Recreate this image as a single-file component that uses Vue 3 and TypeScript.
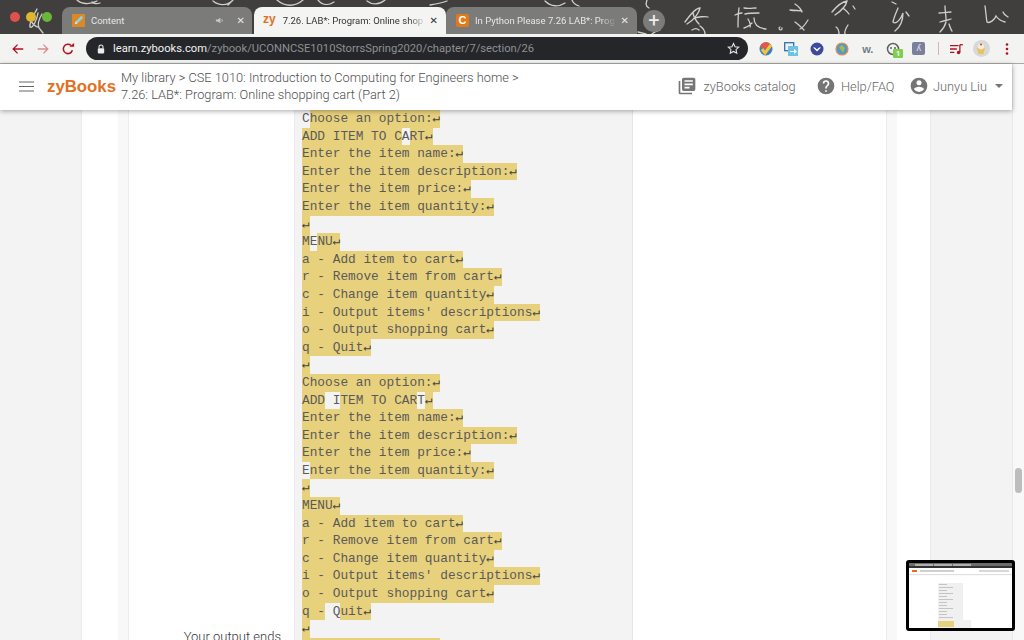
<script setup lang="ts">
type Seg = { t: string; h: boolean };
const H = (t: string): Seg => ({ t, h: true });
const P = (t: string): Seg => ({ t, h: false });
const menu: Seg[][] = [
  [H('a - Add item to cart↵')],
  [H('r - Remove item from cart↵')],
  [H('c - Change item quantity↵')],
  [H("i - Output items' descriptions↵")],
  [H('o - Output shopping cart↵')],
];
const lines: Seg[][] = [
  [P('C'), H('hoose an option:↵')],
  [H('ADD ITEM TO C'), P('A'), H('RT↵')],
  [H('Enter the item name:↵')],
  [H('Enter the item description:↵')],
  [H('Enter the item price:↵')],
  [H('Enter the item quantity:↵')],
  [H('↵')],
  [H('M'), P('E'), H('NU↵')],
  ...menu,
  [H('q - Quit↵')],
  [H('↵')],
  [H('Choose an option:↵')],
  [H('ADD'), P(' I'), H('TEM TO CAR'), P('T'), H('↵')],
  [H('Enter the item name:↵')],
  [H('Enter the item description:↵')],
  [H('Enter the item price:↵')],
  [P('E'), H('nter the item quantity:↵')],
  [H('↵')],
  [H('MENU↵')],
  ...menu,
  [H('q -'), P(' Q'), H('uit↵')],
  [H('↵')],
  [H('Choose an option:↵')],
];
const strokes = [
  'M37 9c-3 6-8 12-7 18 3 2 7-8 8-14M42 14c-3 5-5 10-3 14l4 5M30 20c3 4 6 8 9 7',
  'M77 0c4 4 12 5 20 1M100 3c-3 1-6 1-8-1',
  'M213 1c6 5 14 5 20-1M228 5l5-5',
  'M277 0c8 7 18 7 26 0M318 0c4 5 10 6 16 2',
  'M367 1c5 4 12 4 18-1M430 5c6-1 12-2 17-4',
  'M545 1c6 6 14 6 20 2M572 0c1 3 4 5 7 6',
  'M647 0c-1 3-2 6 2 8M638 32l8 2M660 30c-3 1-6 2-8 4',
  'M685 22c5-7 11-14 15-14-1 5-6 12-13 16M695 18c3-1 10-2 13-1M693 13c1 5 3 8 6 11M700 26c3 2 5 4 5 8M692 30c3-2 5-2 7 0',
  'M739 8c-1 7-1 13-1 19M735 15c2-1 5-2 7-2M744 8c5 1 9 0 12 0M745 14c4-1 10-1 14-1M748 19c2 3 3 5 2 8M754 18c0 6 3 10 12 11M744 28c4-1 6-3 8-5',
  'M795 4c3 2 6 5 7 8M790 10c5 1 9 0 12 1M780 27a1.500 1.500 0 1 0 2 1M795 22c3 2 6 5 9 8M808 20c-2 3-4 7-8 9',
  'M832 12c4-5 10-10 15-11-1 5-6 10-12 14M843 8c2 2 4 3 6 6M853 6l2 3M836 27c3 2 3 4 3 7M848 25c-2 3-4 6-3 9',
  'M892 2l4 2M898 8c-2 5-4 9-5 14 3 3 8-3 10-9 0 7-3 14-8 18M906 12l3 4',
  'M939 13c4 0 9-1 12-1M945 6c0 5 1 9 1 13M940 22c3-1 8-2 11-3M946 22c-1 4-4 8-6 10M949 24c1 3 2 6 3 7',
  'M985 6c1 6 1 11 2 16 3 2 8-3 9-6 2 3 5 5 9 6M1003 12c1 3 3 4 5 5',
];
</script>

<template>
  <div class="screen">
    <div class="tabstrip">
      <svg class="wallpaper" viewBox="0 0 1024 34" width="1024" height="34" aria-hidden="true">
        <path v-for="(d, i) in strokes" :key="i" :d="d" fill="none" stroke="#cfcfcc" stroke-width="1.300" stroke-linecap="round" />
      </svg>
      <div class="lights">
        <i class="light red"></i><i class="light yellow"></i><i class="light green"></i>
      </div>
      <div class="tab dim first">
        <svg class="favicon" viewBox="0 0 14 14" width="13" height="13">
          <rect width="14" height="14" fill="#d98a26" />
          <path d="M3 11l1-3 6-6 2 2-6 6z" fill="#8fd0e8" />
          <path d="M3 11l1-3 2 2z" fill="#f3e6c8" />
        </svg>
        <span class="tabtitle">Content</span>
        <svg class="audio" viewBox="0 0 10 10" width="9" height="9">
          <path d="M1 4h2l3-2v6L3 6H1z" fill="#c8c8c8" />
          <path d="M7.500 3.500c.7.900.7 2.100 0 3" stroke="#c8c8c8" fill="none" />
        </svg>
        <span class="close">✕</span>
      </div>
      <div class="tab active">
        <b class="zy">zy</b>
        <span class="tabtitle fade">7.26. LAB*: Program: Online shop</span>
        <span class="close">✕</span>
      </div>
      <div class="tab dim third">
        <span class="cfav">C</span>
        <span class="tabtitle fade">In Python Please 7.26 LAB*: Prog</span>
        <span class="close">✕</span>
      </div>
      <div class="plus">+</div>
    </div>

    <div class="toolbar">
      <svg class="nav" viewBox="0 0 16 16" width="14" height="14">
        <path d="M14 8H2.500M7.500 3l-5 5 5 5" fill="none" stroke="#b3121d" stroke-width="1.500" />
      </svg>
      <svg class="nav" viewBox="0 0 16 16" width="14" height="14">
        <path d="M2 8h11.500M8.500 3l5 5-5 5" fill="none" stroke="#d88d8f" stroke-width="1.500" />
      </svg>
      <svg class="nav" viewBox="0 0 16 16" width="14" height="14">
        <path d="M13 9.500A5.300 5.300 0 1 1 11.500 4" fill="none" stroke="#b3121d" stroke-width="1.800" />
        <path d="M9.500 5.500H15V1z" fill="#b3121d" />
      </svg>
      <div class="omnibox">
        <svg viewBox="0 0 10 12" width="8" height="10" class="lock">
          <path d="M2.500 5V3.500a2.500 2.500 0 0 1 5 0V5" fill="none" stroke="#eee" stroke-width="1.300" />
          <rect x="1" y="5" width="8" height="6.500" rx="1" fill="#eee" />
        </svg>
        <span class="url"><span class="host">learn.zybooks.com</span>/zybook/UCONNCSE1010StorrsSpring2020/chapter/7/section/26</span>
        <svg class="star" viewBox="0 0 16 16" width="13" height="13">
          <path d="M8 1.800l1.900 4.100 4.500.5-3.300 3 .9 4.400L8 11.600l-4 2.200.9-4.400-3.300-3 4.500-.5z" fill="none" stroke="#e8e8e8" stroke-width="1.300" />
        </svg>
      </div>
      <div class="exts">
        <span class="slot"><svg viewBox="0 0 14 14" width="14" height="14"><circle cx="7" cy="7" r="6.500" fill="#3d7fc4" /><path d="M7 7L1 5a6 6 0 0 1 11-2z" fill="#e2574c" /><path d="M3 7l3 4 6-8" fill="none" stroke="#f2c438" stroke-width="3" /></svg></span>
        <span class="slot"><svg viewBox="0 0 14 14" width="14" height="14"><rect x=".7" y=".7" width="9" height="8" fill="none" stroke="#2f6fb0" stroke-width="1.300" /><rect x="4" y="4" width="10" height="10" fill="#6ec3e4" /><path d="M6 9h4V7l3 2.500-3 2.500v-2H6z" fill="#fff" /></svg></span>
        <span class="slot"><svg viewBox="0 0 14 14" width="14" height="14"><circle cx="7" cy="7" r="6.500" fill="#3b4a9a" /><path d="M3 5.500l4 4 4-4-2 0-2 2-2-2z" fill="#fff" /></svg></span>
        <span class="slot"><svg viewBox="0 0 14 14" width="14" height="14"><circle cx="7" cy="7" r="6" fill="#4d9bc9" stroke="#e8885a" stroke-width="1.200" /><path d="M4 5l3-2 3 3-2 5-2-3z" fill="#a9b84d" /></svg></span>
        <span class="slot wext">w.</span>
        <span class="slot"><span class="badgewrap">
          <svg viewBox="0 0 14 14" width="14" height="14"><circle cx="7" cy="7" r="5.500" fill="none" stroke="#5d6166" stroke-width="1.500" /><circle cx="5" cy="6" r="1" fill="#5d6166" /><circle cx="9" cy="6" r="1" fill="#5d6166" /></svg>
          <span class="badge">1</span>
        </span></span>
        <span class="slot"><span class="aext">ʎ</span></span>
        <span class="sepslot"><i class="sep"></i></span>
        <span class="slot music"><svg viewBox="0 0 16 14" width="14" height="12"><path d="M1 3h10M1 7h8M1 11h5" stroke="#b3121d" stroke-width="1.600" /><path d="M12.500 2v9" stroke="#b3121d" stroke-width="1.500" /><circle cx="11" cy="11" r="2" fill="#b3121d" /><path d="M12.500 2H16" stroke="#b3121d" stroke-width="1.500" /></svg></span>
        <span class="slot av"><span class="avatar">
          <svg viewBox="0 0 14 14" width="14" height="14"><path d="M3 6h8l-1.500 6h-5z" fill="#e8c25e" /><circle cx="7" cy="4.500" r="3" fill="#f6ecd8" /><circle cx="7" cy="2.500" r="1" fill="#b5433c" /></svg>
        </span></span>
        <span class="slot dots"><svg viewBox="0 0 4 14" width="4" height="14"><circle cx="2" cy="2.500" r="1.300" fill="#b3121d" /><circle cx="2" cy="7" r="1.300" fill="#b3121d" /><circle cx="2" cy="11.500" r="1.300" fill="#b3121d" /></svg></span>
      </div>
    </div>

    <div class="page">
      <div class="main">
        <header class="appbar">
          <svg class="burger" viewBox="0 0 15 11" width="15" height="11">
            <path d="M0 1h15M0 5.500h15M0 10h15" stroke="#666" stroke-width="1.200" />
          </svg>
          <span class="logo">zyBooks</span>
          <div class="crumbs">
            <div>My library &gt; CSE 1010: Introduction to Computing for Engineers home &gt;</div>
            <div>7.26: LAB*: Program: Online shopping cart (Part 2)</div>
          </div>
          <div class="actions">
            <span class="action a1">
              <svg viewBox="0 0 24 24" width="20" height="20"><path d="M4 6H2v14a2 2 0 0 0 2 2h14v-2H4zm16-4H8a2 2 0 0 0-2 2v12a2 2 0 0 0 2 2h12a2 2 0 0 0 2-2V4a2 2 0 0 0-2-2zm-1 9H9V9h10zm-4 4H9v-2h6zm4-8H9V5h10z" fill="#757575" /></svg>
              zyBooks catalog
            </span>
            <span class="action a2">
              <svg viewBox="0 0 24 24" width="20" height="20"><path d="M12 2a10 10 0 1 0 0 20 10 10 0 0 0 0-20zm1 17h-2v-2h2zm2.100-7.700l-.9.900c-.7.700-1.200 1.300-1.200 2.800h-2v-.5c0-1.100.5-2.100 1.200-2.800l1.200-1.300c.4-.3.600-.8.600-1.400a2 2 0 0 0-4 0H8a4 4 0 0 1 8 0c0 .9-.4 1.700-.9 2.300z" fill="#757575" /></svg>
              Help/FAQ
            </span>
            <span class="action a3">
              <svg viewBox="0 0 24 24" width="20" height="20"><path d="M12 2a10 10 0 1 0 0 20 10 10 0 0 0 0-20zm0 3a3 3 0 1 1 0 6 3 3 0 0 1 0-6zm0 14.200a7.200 7.200 0 0 1-6-3.200c0-2 4-3.100 6-3.100s6 1.100 6 3.100a7.200 7.200 0 0 1-6 3.200z" fill="#757575" /></svg>
              Junyu Liu
              <i class="caret"></i>
            </span>
          </div>
        </header>
        <div class="content">
          <div class="card">
            <div class="inner">
              <div class="leftcol"><span class="ends">Your output ends</span></div>
              <div class="pre">
                <div v-for="(line, i) in lines" :key="i" class="line"><span v-for="(s, j) in line" :key="j" :class="{ hl: s.h }">{{ s.t.replace('↵', '') }}<span v-if="s.t.endsWith('↵')" class="ar">↵</span></span></div>
              </div>
              <div class="rightcol"></div>
            </div>
            <div class="strip-right"></div>
          </div>
        </div>
      </div>
      <div class="scrolltrack"><i class="thumb"></i></div>
    </div>

    <div class="preview">
      <div class="mini-chrome"><i></i><i></i><i></i></div>
      <div class="mini-bar"></div>
      <div class="mini-head"><i class="mini-logo"></i><i class="mini-title"></i><i class="mini-acts"></i></div>
      <div class="mini-body">
        <div class="mini-pre">
          <i></i><i class="s"></i><i></i><i class="s"></i><i></i><i class="s"></i><i></i><i></i><i class="s"></i><i></i><i></i><i class="s"></i>
        </div>
        <div class="mini-out"><div class="mini-hl"></div></div>
      </div>
    </div>
  </div>
</template>

<style>
html, body { margin: 0; padding: 0; overflow: hidden; }
</style>

<style scoped>
.screen { width: 1024px; height: 640px; display: flex; flex-direction: column; overflow: hidden; position: relative; font-family: Roboto, "Liberation Sans", sans-serif; }
.tabstrip { height: 34px; background: #403f3d; display: flex; align-items: flex-end; position: relative; flex: none; }
.wallpaper { position: absolute; left: 0; top: 0; }
.lights { display: flex; gap: 6px; padding: 0 0 12px 10px; width: 51px; box-sizing: border-box; position: relative; flex: none; }
.light { width: 10px; height: 10px; border-radius: 50%; flex: none; }
.red { background: #e0504d; }
.yellow { background: #dfb62f; }
.green { background: #69b83a; }
.tab { height: 27px; box-sizing: border-box; border-radius: 8px 8px 0 0; display: flex; align-items: center; font-size: 9.500px; position: relative; padding: 0 7px 0 10px; flex: none; }
.tab.dim { background: #7b7b79; color: #e6e6e6; }
.tab.first { margin-left: 11px; width: 190px; }
.tab.active { background: #f4f4f2; color: #333; width: 192px; margin-left: 2px; padding: 0 8px 0 9px; }
.tab.third { width: 191px; padding-right: 8px; }
.favicon { flex: none; margin-right: 6px; }
.tabtitle { flex: 1; white-space: nowrap; overflow: hidden; min-width: 0; }
.fade { -webkit-mask-image: linear-gradient(to right, #000 88%, transparent 100%); mask-image: linear-gradient(to right, #000 88%, transparent 100%); }
.audio { margin-right: 9px; flex: none; }
.close { font-size: 10px; margin-left: 4px; flex: none; font-family: "DejaVu Sans", sans-serif; }
.zy { color: #e2711d; font-size: 12px; font-family: "Liberation Sans", sans-serif; margin: -3px 7px 0 0; }
.cfav { width: 13px; height: 13px; background: #e07a1a; color: #fff; font-weight: 700; font-size: 11px; line-height: 13px; text-align: center; margin-right: 6px; border-radius: 2px; font-family: "Liberation Sans", sans-serif; flex: none; }
.plus { width: 22px; height: 22px; border-radius: 50%; background: #7b7b79; color: #eee; font-size: 20px; line-height: 21px; text-align: center; margin: 0 0 2px 6px; position: relative; flex: none; }
.toolbar { height: 30px; background: #f3f3f1; display: flex; align-items: center; border-bottom: 1px solid #a9a9a9; box-sizing: border-box; padding-left: 11px; flex: none; }
.nav { margin-right: 11px; flex: none; }
.omnibox { width: 662px; height: 23px; border-radius: 12px; background: #25262a; display: flex; align-items: center; padding: 0 8px 0 11px; box-sizing: border-box; color: #8e9094; font-size: 11.200px; flex: none; }
.lock { margin-right: 8px; flex: none; }
.url { flex: 1; white-space: nowrap; }
.host { color: #f2f2f2; }
.exts { display: flex; align-items: center; margin-left: 5px; }
.slot { width: 25.500px; display: flex; align-items: center; justify-content: center; flex: none; }
.sepslot { width: 13px; display: flex; justify-content: center; flex: none; }
.music { width: 23px; }
.av { width: 27.500px; }
.dots { width: 23.500px; }
.wext { font-weight: 700; font-size: 11px; font-family: "Liberation Sans", sans-serif; color: #6f7d88; }
.badgewrap { position: relative; display: flex; }
.badge { position: absolute; left: 7px; top: 7px; width: 10px; height: 9px; background: #7ed04b; color: #fff; font-size: 7.500px; line-height: 9px; text-align: center; border-radius: 1px; font-weight: 700; }
.aext { width: 13px; height: 13px; background: #7c7f9c; color: #e4e4ee; font-size: 9px; line-height: 13px; text-align: center; border-radius: 2px; }
.sep { width: 1px; height: 13px; background: #d9b0ad; display: block; }
.avatar { width: 17px; height: 17px; border-radius: 50%; background: #d8d8d8; display: flex; align-items: center; justify-content: center; }
.page { flex: 1; display: flex; min-height: 0; }
.main { flex: 1; display: flex; flex-direction: column; min-width: 0; position: relative; background: #f3f3f3; }
.appbar { height: 46px; background: #fff; box-shadow: 0 1px 5px rgba(0, 0, 0, 0.35); display: flex; align-items: center; position: relative; z-index: 2; flex: none; box-sizing: border-box; padding: 0 9px 0 19px; }
.burger { flex: none; margin-right: 13px; margin-top: -1px; }
.logo { color: #e2701f; font-weight: 700; font-size: 16.800px; font-family: "Liberation Sans", Arial, sans-serif; width: 74px; flex: none; margin-top: -1px; }
.crumbs { font-size: 12.800px; line-height: 17.500px; color: #4f4f4f; flex: 1; white-space: nowrap; margin-top: -2px; font-weight: 300; }
.actions { display: flex; align-items: center; color: #666; font-size: 12.800px; font-weight: 300; margin-top: -2px; }
.action { display: flex; align-items: center; }
.a1 { gap: 6.500px; margin-right: 20px; }
.a2 { gap: 5.500px; margin-right: 14px; }
.a3 { gap: 4.500px; }
.caret { width: 0; height: 0; border-left: 4px solid transparent; border-right: 4px solid transparent; border-top: 4px solid #757575; margin-left: 3.500px; }
.content { flex: 1; min-height: 0; padding: 0 82px; overflow: hidden; }
.card { background: #fff; display: flex; height: 100%; box-shadow: 0 0 2px rgba(0, 0, 0, 0.1); }
.inner { flex: 1; display: flex; margin-left: 36px; padding-right: 1px; border-left: 10px solid #f8f8f8; border-right: 10px solid #f8f8f8; box-shadow: inset 1px 0 0 #ececec, inset -1px 0 0 #ececec; }
.leftcol { width: 166px; flex: none; display: flex; justify-content: flex-end; align-items: flex-end; padding-right: 13px; box-sizing: border-box; }
.ends { font-size: 13px; color: #333; line-height: 14px; margin-bottom: -3.500px; font-weight: 300; white-space: nowrap; }
.pre { width: 339px; flex: none; box-sizing: border-box; background: #f3f3f3; border-left: 1px solid #eaeaea; border-right: 1px solid #e4e4e4; padding-left: 7px; font-family: "Liberation Mono", monospace; font-size: 12.800px; line-height: 17.600px; color: #5a5a5a; overflow: hidden; }
.line { height: 17.600px; white-space: pre; }
.line > span { display: inline-block; height: 17.600px; vertical-align: top; }
.ar { font-family: "DejaVu Sans Mono", monospace; color: #444; line-height: 1; }
.hl { background: #e8d17c; }
.rightcol { flex: 1; }
.strip-right { width: 33px; flex: none; }
.scrolltrack { width: 12px; flex: none; background: #f8f8f8; border-left: 1px solid #e8e8e8; box-sizing: border-box; position: relative; }
.thumb { position: absolute; left: 2px; top: 404px; width: 7px; height: 25px; border-radius: 4px; background: #bdbdbd; }
.preview { position: absolute; left: 906px; top: 560px; width: 109px; height: 71px; box-sizing: border-box; border: 3px solid #000; border-radius: 3px; background: #fff; overflow: hidden; display: flex; flex-direction: column; }
.mini-chrome { height: 3px; background: #6d6d6d; flex: none; display: flex; gap: 1px; padding-left: 6px; align-items: flex-end; }
.mini-chrome i { width: 18px; height: 2px; background: #b0b0b0; }
.mini-bar { height: 2px; background: #333; flex: none; }
.mini-head { height: 6px; flex: none; display: flex; align-items: center; padding: 0 3px; gap: 3px; box-shadow: 0 1px 1px rgba(0, 0, 0, 0.12); }
.mini-logo { width: 5px; height: 2px; background: #e2701f; }
.mini-title { width: 34px; height: 2px; background: #cfcfcf; }
.mini-acts { width: 30px; height: 2px; background: #d8d8d8; margin-left: auto; }
.mini-body { flex: 1; padding: 9px 0 0 29px; display: flex; flex-direction: column; min-height: 0; }
.mini-pre { width: 25px; height: 37px; background: #f0f0f0; padding: 1px; box-sizing: border-box; display: flex; flex-direction: column; gap: 2px; flex: none; }
.mini-pre i { height: 1px; width: 8px; background: #c4c4c4; flex: none; }
.mini-pre i.s { width: 14px; }
.mini-out { width: 33px; flex: 1; background: #f0f0f0; }
.mini-hl { width: 16px; height: 6px; background: #e8d17c; margin-top: 1px; }
</style>
